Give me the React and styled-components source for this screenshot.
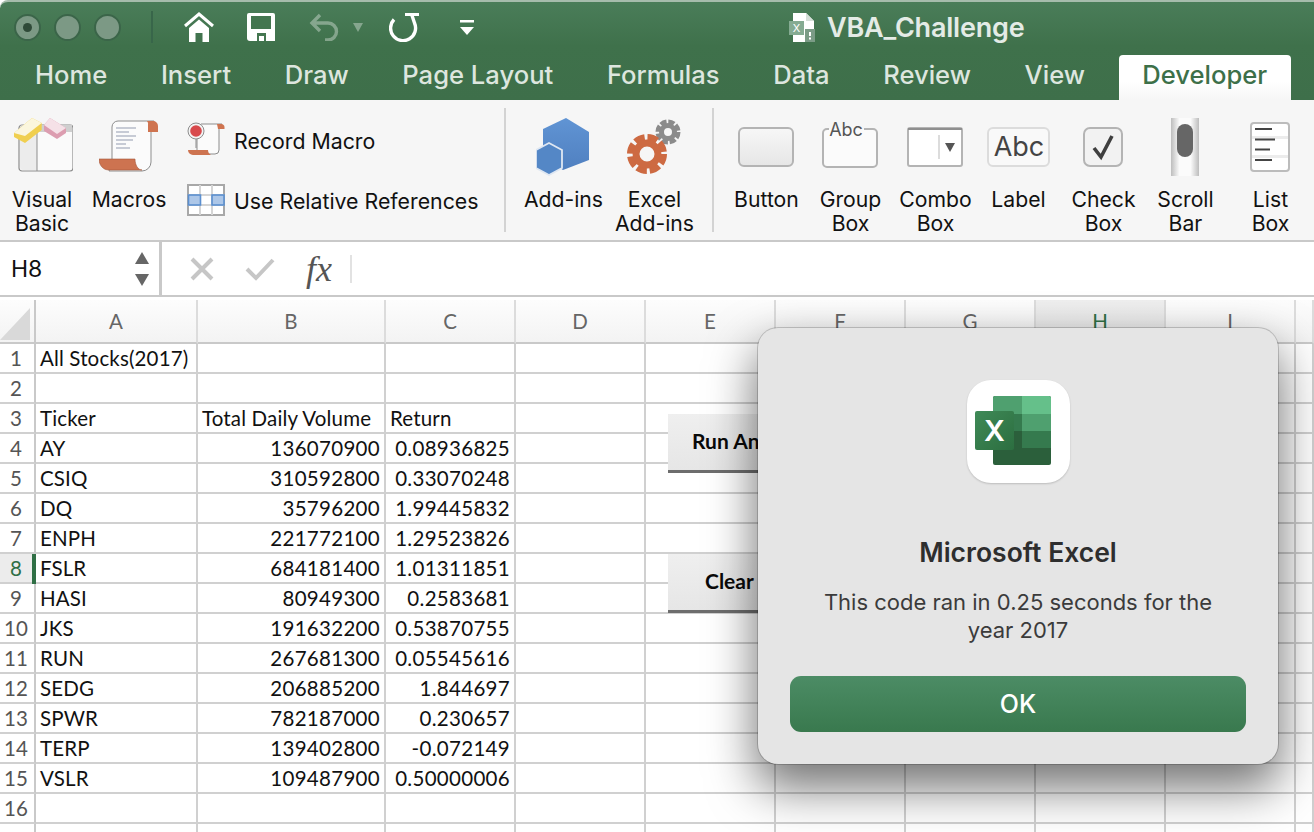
import React from 'react'
import styled, { createGlobalStyle } from 'styled-components'

const GlobalStyle = createGlobalStyle`
  html, body {
    margin: 0;
    padding: 0;
    background: #fff;
  }
  * { box-sizing: border-box; }
`

const UI_FONT = `Inter, "Liberation Sans", sans-serif`
const CELL_FONT = `Lato, "Liberation Sans", sans-serif`

const Window = styled.div`
  position: relative;
  width: 1314px;
  height: 832px;
  overflow: hidden;
  display: flex;
  flex-direction: column;
  font-family: ${UI_FONT};
  background: #fff;
`

/* ---------- title bar + tabs ---------- */

const Chrome = styled.div`
  height: 100px;
  flex: none;
  border-top: 2px solid #a6bcac;
  border-radius: 8px 0 0 0;
  background: linear-gradient(#4a7d59, #3f714b 45%, #3e6f4a);
`

const TitleBar = styled.div`
  height: 53px;
  display: flex;
  align-items: center;
  padding: 0 0 3px 14px;
`

const Light = styled.span`
  width: 27px;
  height: 27px;
  margin-right: ${p => p.$mr || 13}px;
  border-radius: 50%;
  background: #7c9985;
  border: 2px solid #3b6549;
  display: flex;
  align-items: center;
  justify-content: center;
  &::after {
    content: "";
    width: 9px;
    height: 9px;
    border-radius: 50%;
    background: ${p => (p.$dot ? '#2f4a38' : 'transparent')};
  }
`

const TitleRule = styled.span`
  width: 2px;
  height: 32px;
  background: #38664a;
  margin-left: 29px;
`

const QuickIcon = styled.svg`
  flex: none;
  margin-left: ${p => p.$ml}px;
`

const DocTitle = styled.span`
  margin-left: 8px;
  font-size: 27px;
  font-weight: 600;
  letter-spacing: -0.2px;
  color: #e4ebe6;
`

const TabRow = styled.div`
  height: 45px;
  display: flex;
  align-items: stretch;
  padding-left: 8.2px;
`

const Tab = styled.div`
  display: flex;
  align-items: center;
  padding: 0 26.8px 6px;
  font-size: 25.6px;
  font-weight: 500;
  white-space: nowrap;
  color: #dde6df;
`

const ActiveTab = styled(Tab)`
  margin-left: 7px;
  width: 172px;
  padding: 0 0 6px;
  justify-content: center;
  border-radius: 4px 4px 0 0;
  background: linear-gradient(#ffffff 60%, #f6f6f6);
  color: #3d7049;
`

/* ---------- ribbon ---------- */

const Ribbon = styled.div`
  height: 142px;
  flex: none;
  display: flex;
  align-items: flex-start;
  background: #f6f6f6;
  border-bottom: 2px solid #c9c9c9;
  overflow: hidden;
  color: #111;
`

const Tool = styled.div`
  flex: none;
  width: ${p => p.$w}px;
  display: flex;
  flex-direction: column;
  align-items: center;
`

const ToolIcon = styled.div`
  height: 70px;
  margin-top: 12px;
  display: flex;
  align-items: center;
  justify-content: center;
`

const RaisedIcon = styled.svg`
  margin-bottom: ${p => p.$lift}px;
`

const ToolLabel = styled.div`
  margin-top: 5px;
  font-size: 21.2px;
  line-height: 24px;
  text-align: center;
  white-space: pre-line;
`

const RibbonRule = styled.span`
  flex: none;
  width: 2px;
  height: 124px;
  margin: 8px ${p => p.$right}px 0 ${p => p.$left}px;
  background: #d3d3d3;
`

const SmallStack = styled.div`
  flex: none;
  margin-left: 12px;
  padding-top: 24px;
  display: flex;
  flex-direction: column;
  gap: 26px;
`

const SmallTool = styled.div`
  height: 34px;
  display: flex;
  align-items: center;
  gap: 9px;
  font-size: 21.3px;
  white-space: nowrap;
`

const SmallSlot = styled.span`
  width: 39px;
  display: flex;
  justify-content: center;
  margin-top: ${p => p.$mt || 0}px;
`

/* ---------- formula bar ---------- */

const FormulaBar = styled.div`
  height: 55px;
  flex: none;
  display: flex;
  border-bottom: 2px solid #c9c9c9;
  margin-bottom: 3px;
`

const NameBox = styled.div`
  width: 162px;
  padding: 0 10px 0 11px;
  display: flex;
  align-items: center;
  justify-content: space-between;
  border-right: 3px solid #c9c9c9;
  font-size: 23px;
  color: #111;
`

const Stepper = styled.div`
  display: flex;
  flex-direction: column;
  gap: 10px;
`

const FormulaTools = styled.div`
  display: flex;
  align-items: center;
`

const FxLabel = styled.span`
  margin-left: 31px;
  width: 36px;
  font-family: "Liberation Serif", serif;
  font-style: italic;
  font-size: 36px;
  line-height: 1;
  color: #555;
`

const FxRule = styled.span`
  width: 2px;
  height: 28px;
  margin-left: 8px;
  background: #e2e2e2;
`

/* ---------- sheet ---------- */

const Sheet = styled.div`
  flex: 1;
  display: grid;
  grid-template-columns: 36px 162px 188px repeat(7, 130px) 18px;
  grid-template-rows: 44px;
  grid-auto-rows: 30px;
  overflow: hidden;
  font-family: ${CELL_FONT};
  font-size: 20.5px;
  color: #111;
`

const Corner = styled.div`
  height: 44px;
  border-right: 2px solid #c9c9c9;
  border-bottom: 2px solid #c9c9c9;
  background: linear-gradient(#fdfdfd, #f3f3f3);
  position: relative;
  &::after {
    content: "";
    position: absolute;
    left: 0;
    right: 4px;
    top: 8px;
    bottom: 2px;
    background: #d9d9d9;
    clip-path: polygon(100% 0, 100% 100%, 0 100%);
  }
`

const ColHead = styled.div`
  height: 44px;
  display: flex;
  align-items: center;
  justify-content: center;
  border-right: 2px solid #dcdcdc;
  border-bottom: 2px solid #c9c9c9;
  background: ${p => (p.$active ? 'linear-gradient(#efefef, #e6e6e6)' : 'linear-gradient(#fdfdfd, #f3f3f3)')};
  color: ${p => (p.$active ? '#2f6f45' : '#666')};
`

const RowHead = styled.div`
  display: flex;
  align-items: center;
  justify-content: center;
  padding-right: 2px;
  border-right: 2px solid #c9c9c9;
  border-bottom: 2px solid #d0d0d0;
  background: ${p => (p.$active ? '#ececec' : '#fff')};
  color: ${p => (p.$active ? '#2f6f45' : '#555')};
  position: relative;
  &::after {
    content: "";
    display: ${p => (p.$active ? 'block' : 'none')};
    position: absolute;
    right: -2px;
    top: 0;
    bottom: -2px;
    width: 4px;
    background: #2f6f45;
  }
`

const Cell = styled.div`
  display: flex;
  align-items: center;
  justify-content: ${p => (p.$right ? 'flex-end' : 'flex-start')};
  padding: 0 ${p => (p.$right ? 4 : 0)}px 0 ${p => (p.$right ? 0 : 4)}px;
  letter-spacing: ${p => (p.$right ? 0.3 : 0.15)}px;
  white-space: nowrap;
  overflow: hidden;
  border-right: 2px solid #d0d0d0;
  border-bottom: 2px solid #d0d0d0;
`

/* shapes floating on the sheet */
const SheetButton = styled.div`
  position: absolute;
  left: 668px;
  top: ${p => p.$top}px;
  width: 170px;
  height: 59px;
  display: flex;
  align-items: center;
  padding: 0 0 3px ${p => p.$pad}px;
  border-bottom: 3px solid #6d6d6d;
  background: linear-gradient(#efefef, #e6e6e6);
  font-family: ${CELL_FONT};
  font-size: 21px;
  font-weight: 700;
  color: #0a0a0a;
  white-space: nowrap;
`

/* ---------- alert ---------- */

const Dialog = styled.div`
  position: absolute;
  left: 758px;
  top: 328px;
  width: 520px;
  height: 436px;
  padding: 52px 32px 0;
  display: flex;
  flex-direction: column;
  align-items: center;
  border-radius: 20px;
  background: #e5e5e5;
  box-shadow: 0 0 0 1px rgba(0, 0, 0, 0.18), 0 22px 48px 2px rgba(0, 0, 0, 0.55);
`

const AppTile = styled.div`
  width: 103px;
  height: 103px;
  border-radius: 24px;
  background: #fff;
  box-shadow: 0 1px 2px rgba(0, 0, 0, 0.18);
`

const DialogTitle = styled.div`
  margin-top: 53px;
  font-size: 26.5px;
  line-height: 32px;
  font-weight: 600;
  color: #2e2e2e;
`

const DialogText = styled.div`
  margin-top: 20px;
  max-width: 410px;
  font-size: 22px;
  line-height: 28px;
  text-align: center;
  color: #3b3b3b;
`

const OkButton = styled.div`
  margin-top: 32px;
  width: 456px;
  height: 56px;
  flex: none;
  display: flex;
  align-items: center;
  justify-content: center;
  border-radius: 11px;
  background: linear-gradient(#4c8c65, #39794e);
  color: #fff;
  font-size: 25px;
  font-weight: 500;
`

/* ---------- drawings ---------- */

const HomeIcon = () => (
  <QuickIcon $ml={30} width="32" height="30" viewBox="0 0 32 30">
    <path d="M2 14 16 2l14 12" fill="none" stroke="#fff" strokeWidth="3" />
    <path d="M6 16 16 7.5 26 16v14h-6.5v-9h-7v9H6z" fill="#fff" />
  </QuickIcon>
)

const SaveIcon = () => (
  <QuickIcon $ml={32} width="28" height="28" viewBox="0 0 28 28">
    <path d="M2 0h24a2 2 0 0 1 2 2v26H3a3 3 0 0 1-3-3V2a2 2 0 0 1 2-2z" fill="#fff" />
    <path d="M4 3h20v13H4zM10 20h9v8h-9z" fill="#447650" />
    <path d="M12 23h5v5h-5z" fill="#fff" />
  </QuickIcon>
)

const UndoIcon = () => (
  <QuickIcon $ml={34} width="30" height="28" viewBox="0 0 30 28" opacity=".35">
    <path d="M11 2 3 10l8 8M3 10h16a8.5 8.5 0 0 1 0 17h-3" fill="none" stroke="#fff" strokeWidth="3.4" />
  </QuickIcon>
)

const DropCaret = () => (
  <QuickIcon $ml={14} width="10" height="9" viewBox="0 0 10 9" opacity=".35">
    <path d="M0 0h10L5 9z" fill="#fff" />
  </QuickIcon>
)

const RedoIcon = () => (
  <QuickIcon $ml={26} width="30" height="30" viewBox="0 0 30 30">
    <path d="M5 7.5A12.5 12.5 0 1 0 25.5 11L22.500 2" fill="none" stroke="#fff" strokeWidth="3.4" />
    <path d="M16 2.500h14" stroke="#fff" strokeWidth="3" />
  </QuickIcon>
)

const CustomizeIcon = () => (
  <QuickIcon $ml={41} width="14" height="15" viewBox="0 0 14 15">
    <path d="M0 0h14v2.500H0zM0 7h14l-7 8z" fill="#fff" />
  </QuickIcon>
)

const FileIcon = () => (
  <QuickIcon $ml={315} width="30" height="29" viewBox="0 0 30 29">
    <path d="M4 0h13l8 8v21H4z" fill="#fff" />
    <path d="M17 0v8h8z" fill="#d5dfd8" />
    <rect x="0" y="8" width="15" height="14" fill="#85ab92" />
    <text x="7.500" y="19" textAnchor="middle" fontSize="11" fontFamily="Inter, sans-serif" fill="#fff">X</text>
    <rect x="16" y="16" width="10" height="13" fill="#7b9b86" />
    <rect x="20" y="19" width="2" height="4" fill="#fff" />
    <rect x="20" y="24.500" width="2" height="2" fill="#fff" />
  </QuickIcon>
)

const VisualBasicIcon = () => (
  <RaisedIcon $lift={4} width="62" height="54" viewBox="0 0 62 54">
    <rect x="8" y="7" width="54" height="46" rx="3" fill="#fafafa" stroke="#8d8d8d" strokeWidth="1.200" />
    <path d="M9 10a3 3 0 0 1 3-3h49v7H9z" fill="#cfcfcf" />
    <path d="M9 14h17v38H12a3 3 0 0 1-3-3z" fill="#ececec" />
    <path d="M26 14v39" stroke="#8d8d8d" strokeWidth="1" />
    <path d="M3 15 21 0l9.700 5v7L14 25 3 19z" fill="#f0cf4f" />
    <path d="M3 15 21 0l9.700 5L14 18z" fill="#fbf6dd" />
    <path d="M33 7l6-7 16 10v5l-9 6-13-8z" fill="#dc9db0" />
    <path d="M33 7l6-7 16 10-9 6z" fill="#f5e1e7" />
  </RaisedIcon>
)

const MacrosIcon = () => (
  <RaisedIcon $lift={2} width="60" height="52" viewBox="0 0 60 52">
    <path d="M13 40V7a6 6 0 0 1 6-6h36l-3 11v30a9 9 0 0 1-9 9H10z" fill="#fbfbfb" stroke="#8d8d8d" />
    <path d="M48 1h6a5 5 0 0 1 5 5v6H49V6a5 5 0 0 0-1-5z" fill="#cf7450" />
    <path d="M17 8h20M17 12h13M17 16h20M17 20h17M17 24h10M17 28h14" stroke="#b6bcc9" strokeWidth="1.600" />
    <path d="M0 39h36c0 6 3 11 7 11H10C4 50 0 45 0 39z" fill="#cd7350" stroke="#a4573a" strokeWidth=".6" />
  </RaisedIcon>
)

const RecordIcon = () => (
  <svg width="38" height="34" viewBox="0 0 38 34">
    <path d="M14 2h21l-3 4v22a4 4 0 0 1-4 4H10V16" fill="#fbfbfb" stroke="#8d8d8d" />
    <path d="M30 2h4a3.500 3.500 0 0 1 3.500 3.500V7H31z" fill="#cf7450" />
    <circle cx="9" cy="9" r="8" fill="#f4f4f4" stroke="#8d8d8d" />
    <circle cx="9" cy="9" r="5.800" fill="#d8494c" />
    <path d="M9 17v9" stroke="#8d8d8d" />
    <path d="M1 28h20c0 2 1 4 3 5H6a5 5 0 0 1-5-5z" fill="#cd7350" />
  </svg>
)

const RelativeIcon = () => (
  <svg width="38" height="32" viewBox="0 0 38 32">
    <rect x="1" y="1" width="36" height="30" fill="#fff" stroke="#a8a8a8" strokeWidth="2" />
    <path d="M13 1v30M25 1v30M1 11h36M1 21h36" stroke="#d5d5d5" strokeWidth="2" />
    <rect x="1.500" y="11" width="12" height="10" fill="#adc7e8" stroke="#5b8fcf" strokeWidth="1.600" />
    <rect x="25" y="11" width="12" height="10" fill="#adc7e8" stroke="#5b8fcf" strokeWidth="1.600" />
  </svg>
)

const AddInsIcon = () => (
  <svg width="54" height="58" viewBox="0 0 54 58">
    <defs>
      <linearGradient id="hexFill" x1="0" y1="0" x2="0" y2="1">
        <stop offset="0" stopColor="#6094d4" />
        <stop offset="1" stopColor="#5080c0" />
      </linearGradient>
    </defs>
    <path d="M30 0 53 14v28L27 52 7 40V11z" fill="url(#hexFill)" />
    <path d="M13 25 26 32v18L13 57 0 50V32z" fill="#5487c6" stroke="#dfe7f2" strokeWidth="1.800" />
  </svg>
)

const Gear = ({ cx, cy, r, fill, hole }) => (
  <g>
    <circle cx={cx} cy={cy} r={r * 0.82} fill="none" stroke={fill} strokeWidth={r * 0.36}
      strokeDasharray={`${r * 0.5} ${((2 * Math.PI * r * 0.82) / 8) - r * 0.5}`} />
    <circle cx={cx} cy={cy} r={(r * 0.72 + hole) / 2} fill="none" stroke={fill} strokeWidth={r * 0.72 - hole} />
  </g>
)

const ExcelAddInsIcon = () => (
  <svg width="54" height="56" viewBox="0 0 54 56">
    <Gear cx={41} cy={13} r={12.500} fill="#8b8b8b" hole={4} />
    <Gear cx={20} cy={35} r={20} fill="#cd6a42" hole={7.500} />
  </svg>
)

const ButtonIcon = () => (
  <svg width="56" height="40" viewBox="0 0 56 40">
    <defs>
      <linearGradient id="btnFill" x1="0" y1="0" x2="0" y2="1">
        <stop offset="0" stopColor="#f7f7f7" />
        <stop offset="1" stopColor="#e6e6e6" />
      </linearGradient>
    </defs>
    <rect x="1" y="1" width="54" height="38" rx="5" fill="url(#btnFill)" stroke="#b4b4b4" strokeWidth="2" />
  </svg>
)

const GroupBoxIcon = () => (
  <RaisedIcon $lift={8} width="56" height="50" viewBox="0 -4 56 50">
    <path d="M7 7H5a4 4 0 0 0-4 4v30a4 4 0 0 0 4 4h46a4 4 0 0 0 4-4V11a4 4 0 0 0-4-4h-9" fill="#fbfbfb" stroke="#b4b4b4" strokeWidth="2" />
    <text x="24" y="14" textAnchor="middle" fontSize="18" fontFamily="Inter, sans-serif" fill="#555">Abc</text>
  </RaisedIcon>
)

const ComboIcon = () => (
  <svg width="56" height="40" viewBox="0 0 56 40">
    <rect x="1" y="1" width="54" height="38" rx="2" fill="#fff" stroke="#b4b4b4" strokeWidth="2" />
    <path d="M1 2h54" stroke="#8f8f8f" strokeWidth="2" />
    <path d="M32 8v24" stroke="#d0d0d0" strokeWidth="1.500" />
    <path d="M38 16h10l-5 9z" fill="#555" />
  </svg>
)

const LabelIcon = () => (
  <svg width="63" height="40" viewBox="0 0 63 40">
    <rect x="1" y="1" width="61" height="38" rx="5" fill="#f9f9f9" stroke="#dcdcdc" strokeWidth="2" />
    <text x="32" y="29" textAnchor="middle" fontSize="27" fontFamily="Inter, sans-serif" fill="#444">Abc</text>
  </svg>
)

const CheckIcon = () => (
  <svg width="40" height="40" viewBox="0 0 40 40">
    <rect x="1" y="1" width="38" height="38" rx="6" fill="#f2f2f2" stroke="#b4b4b4" strokeWidth="2" />
    <path d="M11 21l7 9L29 9" fill="none" stroke="#3f3f3f" strokeWidth="3.600" />
  </svg>
)

const ScrollIcon = () => (
  <svg width="28" height="58" viewBox="0 0 28 58">
    <defs>
      <linearGradient id="scrollFill" x1="0" y1="0" x2="1" y2="0">
        <stop offset="0" stopColor="#bdbdbd" />
        <stop offset=".3" stopColor="#fbfbfb" />
        <stop offset=".7" stopColor="#fbfbfb" />
        <stop offset="1" stopColor="#bdbdbd" />
      </linearGradient>
    </defs>
    <rect width="28" height="58" fill="url(#scrollFill)" />
    <rect x="6" y="6" width="16" height="33" rx="8" fill="#666" />
  </svg>
)

const ListIcon = () => (
  <svg width="40" height="50" viewBox="0 0 40 50">
    <rect x="1" y="1" width="38" height="48" rx="3" fill="#fff" stroke="#bcbcbc" strokeWidth="2" />
    <path d="M2 14h36v3H2zM2 33h36v3H2z" fill="#ececec" />
    <path d="M3 7h17M3 17.500h20M3 27.500h15M3 38h17" stroke="#444" strokeWidth="2" transform="translate(2 0)" />
  </svg>
)

const Triangle = ({ up }) => (
  <svg width="14" height="12" viewBox="0 0 14 12">
    <path d={up ? 'M7 0l7 12H0z' : 'M0 0h14L7 12z'} fill="#666" />
  </svg>
)

const CrossIcon = () => (
  <QuickIcon $ml={28} width="24" height="24" viewBox="0 0 24 24">
    <path d="M2 2l20 20M22 2 2 22" stroke="#c6c6c6" strokeWidth="4" />
  </QuickIcon>
)

const TickIcon = () => (
  <QuickIcon $ml={31} width="30" height="24" viewBox="0 0 30 24">
    <path d="M2 12l9 9L28 3" fill="none" stroke="#c6c6c6" strokeWidth="4" />
  </QuickIcon>
)

const ExcelLogo = () => (
  <svg width="103" height="103" viewBox="0 0 103 103">
    <defs>
      <linearGradient id="xTile" x1="0" y1="0" x2="1" y2="1">
        <stop offset="0" stopColor="#3f8a57" />
        <stop offset="1" stopColor="#2c6e40" />
      </linearGradient>
    </defs>
    <rect x="26" y="16" width="58" height="69" rx="2" fill="#2b5f3b" />
    <path d="M26 18a2 2 0 0 1 2-2h27v18H26z" fill="#4fa06f" />
    <path d="M55 16h27a2 2 0 0 1 2 2v16H55z" fill="#65c08a" />
    <path d="M26 34h29v17H26z" fill="#357a4e" />
    <path d="M55 34h29v17H55z" fill="#4fa06f" />
    <path d="M26 51h29v17H26z" fill="#2b5f3b" />
    <path d="M55 51h29v17H55z" fill="#357a4e" />
    <rect x="8" y="31" width="39" height="39" rx="2" fill="url(#xTile)" />
    <text x="27.500" y="61" textAnchor="middle" fontSize="29" fontWeight="600" fontFamily={UI_FONT} fill="#fff">X</text>
  </svg>
)

/* ---------- data ---------- */

const columns = ['A', 'B', 'C', 'D', 'E', 'F', 'G', 'H', 'I', 'J']

const rows = [
  ['All Stocks(2017)'],
  [],
  ['Ticker', 'Total Daily Volume', 'Return'],
  ['AY', '136070900', '0.08936825'],
  ['CSIQ', '310592800', '0.33070248'],
  ['DQ', '35796200', '1.99445832'],
  ['ENPH', '221772100', '1.29523826'],
  ['FSLR', '684181400', '1.01311851'],
  ['HASI', '80949300', '0.2583681'],
  ['JKS', '191632200', '0.53870755'],
  ['RUN', '267681300', '0.05545616'],
  ['SEDG', '206885200', '1.844697'],
  ['SPWR', '782187000', '0.230657'],
  ['TERP', '139402800', '-0.072149'],
  ['VSLR', '109487900', '0.50000006'],
  [],
  [],
]

const tabs = ['Home', 'Insert', 'Draw', 'Page Layout', 'Formulas', 'Data', 'Review', 'View']

export default function App() {
  return (
    <Window>
      <GlobalStyle />
      <Chrome>
        <TitleBar>
          <Light $dot />
          <Light />
          <Light $mr={1} />
          <TitleRule />
          <HomeIcon />
          <SaveIcon />
          <UndoIcon />
          <DropCaret />
          <RedoIcon />
          <CustomizeIcon />
          <FileIcon />
          <DocTitle>VBA_Challenge</DocTitle>
        </TitleBar>
        <TabRow>
          {tabs.map(t => <Tab key={t}>{t}</Tab>)}
          <ActiveTab>Developer</ActiveTab>
        </TabRow>
      </Chrome>

      <Ribbon>
        <Tool $w={84}>
          <ToolIcon><VisualBasicIcon /></ToolIcon>
          <ToolLabel>{'Visual\nBasic'}</ToolLabel>
        </Tool>
        <Tool $w={90}>
          <ToolIcon><MacrosIcon /></ToolIcon>
          <ToolLabel>Macros</ToolLabel>
        </Tool>
        <SmallStack>
          <SmallTool>
            <SmallSlot $mt={-4}><RecordIcon /></SmallSlot>
            Record Macro
          </SmallTool>
          <SmallTool>
            <SmallSlot $mt={-2}><RelativeIcon /></SmallSlot>
            Use Relative References
          </SmallTool>
        </SmallStack>
        <RibbonRule $left={26} $right={16} />
        <Tool $w={82}>
          <ToolIcon><AddInsIcon /></ToolIcon>
          <ToolLabel>Add-ins</ToolLabel>
        </Tool>
        <Tool $w={100}>
          <ToolIcon><ExcelAddInsIcon /></ToolIcon>
          <ToolLabel>{'Excel\nAdd-ins'}</ToolLabel>
        </Tool>
        <RibbonRule $left={8} $right={10} />
        <Tool $w={84}>
          <ToolIcon><ButtonIcon /></ToolIcon>
          <ToolLabel>Button</ToolLabel>
        </Tool>
        <Tool $w={84}>
          <ToolIcon><GroupBoxIcon /></ToolIcon>
          <ToolLabel>{'Group\nBox'}</ToolLabel>
        </Tool>
        <Tool $w={86}>
          <ToolIcon><ComboIcon /></ToolIcon>
          <ToolLabel>{'Combo\nBox'}</ToolLabel>
        </Tool>
        <Tool $w={80}>
          <ToolIcon><LabelIcon /></ToolIcon>
          <ToolLabel>Label</ToolLabel>
        </Tool>
        <Tool $w={90}>
          <ToolIcon><CheckIcon /></ToolIcon>
          <ToolLabel>{'Check\nBox'}</ToolLabel>
        </Tool>
        <Tool $w={74}>
          <ToolIcon><ScrollIcon /></ToolIcon>
          <ToolLabel>{'Scroll\nBar'}</ToolLabel>
        </Tool>
        <Tool $w={96}>
          <ToolIcon><ListIcon /></ToolIcon>
          <ToolLabel>{'List\nBox'}</ToolLabel>
        </Tool>
      </Ribbon>

      <FormulaBar>
        <NameBox>
          H8
          <Stepper>
            <Triangle up />
            <Triangle />
          </Stepper>
        </NameBox>
        <FormulaTools>
          <CrossIcon />
          <TickIcon />
          <FxLabel>fx</FxLabel>
          <FxRule />
        </FormulaTools>
      </FormulaBar>

      <Sheet>
        <Corner />
        {columns.map(c => <ColHead key={c} $active={c === 'H'}>{c === 'J' ? '' : c}</ColHead>)}
        {rows.map((row, r) => (
          <React.Fragment key={r}>
            <RowHead $active={r === 7}>{r < 16 ? r + 1 : ''}</RowHead>
            {columns.map((c, i) => (
              <Cell key={c} $right={i > 0 && r > 2}>{row[i] || ''}</Cell>
            ))}
          </React.Fragment>
        ))}
      </Sheet>

      <SheetButton $top={414} $pad={24}>Run Analysis</SheetButton>
      <SheetButton $top={554} $pad={37}>Clear</SheetButton>

      <Dialog>
        <AppTile><ExcelLogo /></AppTile>
        <DialogTitle>Microsoft Excel</DialogTitle>
        <DialogText>This code ran in 0.25 seconds for the year 2017</DialogText>
        <OkButton>OK</OkButton>
      </Dialog>
    </Window>
  )
}
